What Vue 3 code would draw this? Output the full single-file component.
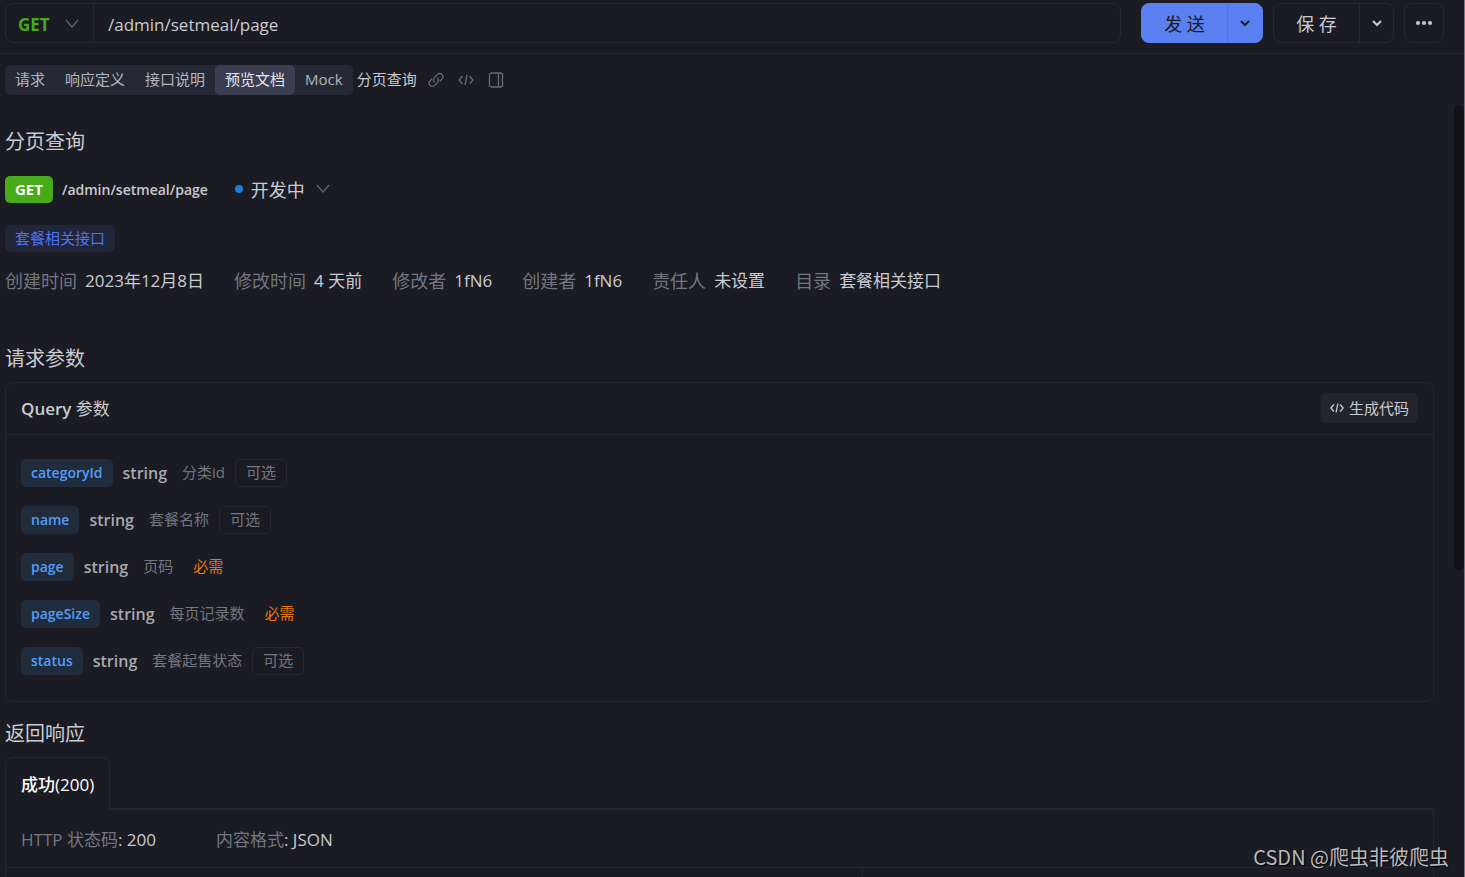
<template>
  <div class="page">
    <header class="toolbar">
      <div class="url-box">
        <div class="method">
          <select v-model="method" aria-label="Method">
            <option>GET</option>
          </select>
          <svg class="chevron" viewBox="0 0 14 10"><path d="M1 1l6 7 6-7" /></svg>
        </div>
        <input v-model="url" type="text" aria-label="URL" />
      </div>

      <div class="split primary">
        <button class="main">发 送</button>
        <button class="more" aria-label="发送选项">
          <svg class="arrow" viewBox="0 0 12 8"><path d="M2 2l4 4 4-4" /></svg>
        </button>
      </div>
      <div class="split">
        <button class="main">保 存</button>
        <button class="more" aria-label="保存选项">
          <svg class="arrow" viewBox="0 0 12 8"><path d="M2 2l4 4 4-4" /></svg>
        </button>
      </div>
      <button class="dots" aria-label="更多">
        <svg viewBox="0 0 18 4">
          <circle cx="3" cy="2" r="2" />
          <circle cx="9" cy="2" r="2" />
          <circle cx="15" cy="2" r="2" />
        </svg>
      </button>
    </header>

    <nav class="tabs">
      <div class="tab-group">
        <button
          v-for="tab in tabs"
          :key="tab"
          :class="{ active: tab === activeTab }"
          @click="activeTab = tab"
        >
          {{ tab }}
        </button>
      </div>
      <span class="tab-name">分页查询</span>
      <button class="icon" aria-label="复制链接">
        <svg viewBox="0 0 16 16">
          <path d="M6.600 10.200a3.200 3.200 0 0 1-.2-4.600l2.900-3a3.200 3.200 0 0 1 4.600 4.500l-2 2.100" />
          <path d="M9.400 5.800a3.200 3.200 0 0 1 .2 4.600l-2.900 3a3.200 3.200 0 0 1-4.600-4.500l2-2.100" />
        </svg>
      </button>
      <button class="icon" aria-label="代码">
        <svg viewBox="0 0 16 16"><path d="M4.500 4L1 8l3.500 4M11.500 4L15 8l-3.500 4M9 3L7 13" /></svg>
      </button>
      <button class="icon" aria-label="侧栏">
        <svg viewBox="0 0 16 16">
          <rect x="1.500" y="1" width="13" height="14" rx="2" />
          <path d="M10.500 1v14" />
        </svg>
      </button>
    </nav>

    <main class="doc">
      <h2>分页查询</h2>

      <div class="summary">
        <span class="badge">GET</span>
        <span class="path">/admin/setmeal/page</span>
        <button class="status">
          <i></i>开发中
          <svg class="chevron" viewBox="0 0 14 10"><path d="M1 1l6 7 6-7" /></svg>
        </button>
      </div>

      <a class="tag" href="#">套餐相关接口</a>

      <dl class="meta">
        <div v-for="item in meta" :key="item.label">
          <dt>{{ item.label }}</dt>
          <dd>{{ item.value }}</dd>
        </div>
      </dl>

      <h2 class="request-title">请求参数</h2>
      <section class="card">
        <div class="card-head">
          <h3><b>Query</b> 参数</h3>
          <button class="generate">
            <svg viewBox="0 0 16 16"><path d="M4.500 4L1 8l3.500 4M11.500 4L15 8l-3.500 4M9 3L7 13" /></svg>
            生成代码
          </button>
        </div>
        <ul class="params">
          <li v-for="param in params" :key="param.name">
            <code>{{ param.name }}</code>
            <span class="type">string</span>
            <span class="desc">{{ param.desc }}</span>
            <span v-if="param.required" class="required">必需</span>
            <span v-else class="optional">可选</span>
          </li>
        </ul>
      </section>

      <h2 class="response-title">返回响应</h2>
      <section class="response">
        <div class="response-tabs">
          <button>成功(200)</button>
        </div>
        <div class="response-body">
          <div class="response-info">
            <span><em>HTTP 状态码</em>: 200</span>
            <span><em>内容格式</em>: JSON</span>
          </div>
          <div class="columns">
            <div></div>
            <div></div>
          </div>
        </div>
      </section>
    </main>

    <div class="scrollbar"></div>
    <div class="watermark">CSDN @爬虫非彼爬虫</div>
  </div>
</template>

<script setup>
import { ref } from "vue"

const method = ref("GET")
const url = ref("/admin/setmeal/page")

const tabs = ["请求", "响应定义", "接口说明", "预览文档", "Mock"]
const activeTab = ref("预览文档")

const meta = [
  { label: "创建时间", value: "2023年12月8日" },
  { label: "修改时间", value: "4 天前" },
  { label: "修改者", value: "1fN6" },
  { label: "创建者", value: "1fN6" },
  { label: "责任人", value: "未设置" },
  { label: "目录", value: "套餐相关接口" }
]

const params = [
  { name: "categoryId", desc: "分类id", required: false },
  { name: "name", desc: "套餐名称", required: false },
  { name: "page", desc: "页码", required: true },
  { name: "pageSize", desc: "每页记录数", required: true },
  { name: "status", desc: "套餐起售状态", required: false }
]
</script>

<style>
body {
  margin: 0;
  background: #1b1b24;
}
</style>

<style scoped>
* {
  box-sizing: border-box;
}

.page {
  position: relative;
  height: 100vh;
  overflow: hidden;
  display: flex;
  flex-direction: column;
  border-right: 1px solid #77777d;
  background: #1b1b24;
  color: #c8cbd0;
  font-family: "Open Sans", "Noto Sans CJK SC", sans-serif;
  font-size: 17px;
}

button,
input,
select {
  padding: 0;
  border: none;
  outline: none;
  background: none;
  color: inherit;
  font: inherit;
}

button {
  cursor: pointer;
}

svg {
  display: block;
  fill: none;
  stroke: currentColor;
}

h2,
h3,
dl,
dd,
ul {
  margin: 0;
  padding: 0;
  font-weight: 400;
}

.chevron {
  width: 14px;
  height: 10px;
  color: #62646c;
  stroke-width: 1.3;
}

/* toolbar */
.toolbar {
  flex: none;
  display: flex;
  gap: 10px;
  height: 54px;
  padding: 3px 20px 10px 5px;
  border-bottom: 1px solid #262631;
}

.url-box {
  flex: 1;
  display: flex;
  margin-right: 10px;
  border: 1px solid #282832;
  border-radius: 8px;
}

.method {
  position: relative;
  display: flex;
  width: 88px;
  border-right: 1px solid #282832;
}

.method select {
  flex: 1;
  padding: 2px 0 0 12px;
  appearance: none;
  color: #45a81a;
  font-weight: 700;
}

.method .chevron {
  position: absolute;
  right: 14px;
  top: 15px;
  pointer-events: none;
}

.url-box input {
  flex: 1;
  padding: 2px 14px 0;
}

.split {
  display: flex;
  border: 1px solid #282832;
  border-radius: 8px;
}

.split .main {
  width: 85px;
  font-size: 18px;
}

.split .more {
  display: flex;
  align-items: center;
  justify-content: center;
  width: 34px;
  border-left: 1px solid #282832;
}

.arrow {
  width: 12px;
  height: 8px;
  stroke-width: 2;
}

.split.primary {
  border-color: #5a80f2;
  background: #5a80f2;
  color: #1b1b24;
}

.split.primary .more {
  width: 35px;
  border-left-color: #5273dc;
}

.dots {
  display: flex;
  align-items: center;
  justify-content: center;
  width: 40px;
  border: 1px solid #282832;
  border-radius: 8px;
}

.dots svg {
  width: 18px;
  height: 4px;
  fill: currentColor;
  stroke: none;
}

/* tabs */
.tabs {
  flex: none;
  display: flex;
  align-items: center;
  padding: 11px 5px;
  font-size: 15px;
}

.tab-group {
  display: flex;
  border-radius: 5px;
  background: #252935;
}

.tab-group button {
  height: 30px;
  padding: 0 10px 3px;
  border-radius: 5px;
  color: #b2b5ba;
}

.tab-group button.active {
  background: #3b3d50;
  color: #e6e7ea;
}

.tab-name {
  margin: 0 4px;
  padding-bottom: 3px;
}

.icon {
  display: flex;
  align-items: center;
  justify-content: center;
  width: 30px;
  height: 30px;
  color: #686a72;
}

.icon svg {
  width: 16px;
  height: 16px;
  stroke-width: 1.3;
}

/* document */
.doc {
  flex: 1;
  display: flex;
  flex-direction: column;
  padding: 21px 30px 0 5px;
}

.doc h2 {
  font-size: 20px;
  line-height: 30px;
}

.summary {
  display: flex;
  align-items: center;
  height: 27px;
  margin-top: 19px;
}

.badge {
  padding: 0 10px;
  border-radius: 5px;
  background: #48ab1a;
  color: #fff;
  font-size: 15px;
  font-weight: 700;
  line-height: 27px;
}

.path {
  margin: 0 27px 0 9px;
  font-size: 14px;
  font-weight: 600;
}

.status {
  display: flex;
  align-items: center;
  padding-bottom: 2px;
  font-size: 18px;
}

.status i {
  width: 8px;
  height: 8px;
  margin-right: 8px;
  border-radius: 50%;
  background: #1b7fdf;
}

.status .chevron {
  margin-left: 11px;
}

.tag {
  align-self: flex-start;
  margin-top: 22px;
  padding: 0 10px;
  border-radius: 5px;
  background: #20253a;
  color: #4e74f2;
  font-size: 15px;
  line-height: 27px;
  text-decoration: none;
}

.meta {
  display: flex;
  gap: 30px;
  margin-top: 14px;
  line-height: 30px;
}

.meta div {
  display: flex;
  gap: 8px;
}

.meta dt {
  color: #72777f;
  font-size: 18px;
}

.doc .request-title {
  margin-top: 48px;
}

.card {
  height: 320px;
  margin-top: 8px;
  border: 1px solid #262631;
  border-radius: 8px;
}

.card-head {
  display: flex;
  align-items: center;
  justify-content: space-between;
  height: 52px;
  padding: 0 15px 2px;
  border-bottom: 1px solid #262631;
}

.card-head h3 {
  font-size: 17px;
}

.card-head b {
  font-weight: 600;
}

.generate {
  display: flex;
  align-items: center;
  gap: 5px;
  height: 30px;
  padding: 0 9px;
  border-radius: 5px;
  background: #24242d;
  font-size: 15px;
  line-height: 28px;
}

.generate svg {
  width: 14px;
  height: 14px;
  stroke-width: 1.5;
}

.params {
  display: flex;
  flex-direction: column;
  gap: 19px;
  padding: 24px 15px;
  list-style: none;
}

.params li {
  display: flex;
  align-items: center;
  height: 28px;
  font-size: 15px;
  line-height: 28px;
}

.params code {
  padding: 0 10px;
  border-radius: 5px;
  background: #202b3c;
  color: #529ef8;
  font-family: inherit;
  font-size: 14px;
  font-weight: 600;
}

.type {
  margin: 0 15px 0 10px;
  color: #a6a9ae;
  font-size: 16px;
  font-weight: 600;
}

.desc,
.required {
  padding-bottom: 2px;
}

.desc {
  color: #72777f;
}

.optional {
  margin-left: 10px;
  padding: 0 10px 2px;
  border: 1px solid #282832;
  border-radius: 5px;
  color: #72777f;
  line-height: 24px;
}

.required {
  margin-left: 20px;
  color: #e6780c;
}

.doc .response-title {
  margin-top: 17px;
}

.response {
  flex: 1;
  display: flex;
  flex-direction: column;
  margin-top: 8px;
}

.response-tabs {
  display: flex;
  border-bottom: 2px solid #262631;
}

.response-tabs button {
  height: 53px;
  margin-bottom: -2px;
  padding: 0 15px 2px;
  border: 1px solid #262631;
  border-bottom: none;
  border-radius: 8px 8px 0 0;
  background: #1b1b24;
  color: #fff;
  font-weight: 500;
}

.response-body {
  flex: 1;
  display: flex;
  flex-direction: column;
  border: 1px solid #262631;
  border-width: 0 1px;
}

.response-info {
  display: flex;
  gap: 60px;
  height: 58px;
  padding: 2px 15px 0;
  border-bottom: 1px solid #262631;
  line-height: 56px;
}

.response-info em {
  color: #72777f;
  font-style: normal;
}

.columns {
  flex: 1;
  display: grid;
  grid-template-columns: 3fr 2fr;
}

.columns div + div {
  border-left: 1px solid #262631;
}

.scrollbar {
  position: absolute;
  top: 105px;
  right: 0;
  width: 10px;
  height: 53%;
  border-radius: 5px;
  background: #111116;
}

.watermark {
  position: absolute;
  right: 15px;
  bottom: 5px;
  color: #b9b9bc;
  font-family: "Noto Sans CJK SC", sans-serif;
  font-size: 20px;
  line-height: 30px;
  text-shadow: 1px 1px 1px #000;
}
</style>
